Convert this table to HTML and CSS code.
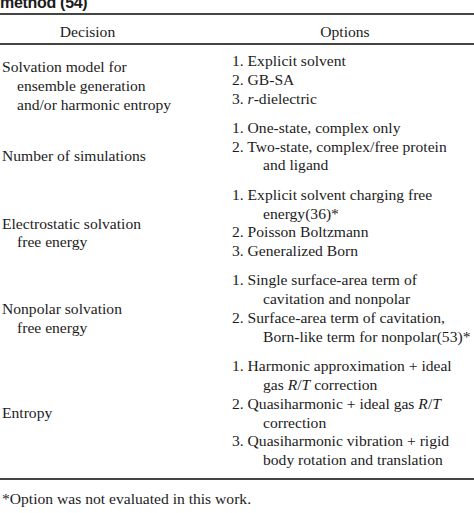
FILE: index.html
```html
<!DOCTYPE html>
<html>
<head>
<meta charset="utf-8">
<link rel="stylesheet" href="styles.css">
</head>
<body>
<div class="title">method (54)</div>
<div class="table">
  <div class="head">
    <div class="hcell h1">Decision</div>
    <div class="hcell h2">Options</div>
  </div>
  <div class="body">
    <div class="row">
      <div class="dec off6">Solvation model for<br>ensemble generation<br>and/or harmonic entropy</div>
      <ol class="opts">
        <li>1. Explicit solvent</li>
        <li>2. GB-SA</li>
        <li>3. <i>r</i>-dielectric</li>
      </ol>
    </div>
    <div class="row">
      <div class="dec off9">Number of simulations</div>
      <ol class="opts">
        <li>1. One-state, complex only</li>
        <li>2. Two-state, complex/free protein<br>and ligand</li>
      </ol>
    </div>
    <div class="row">
      <div class="dec off10">Electrostatic solvation<br>free energy</div>
      <ol class="opts">
        <li>1. Explicit solvent charging free<br>energy(36)*</li>
        <li>2. Poisson Boltzmann</li>
        <li>3. Generalized Born</li>
      </ol>
    </div>
    <div class="row">
      <div class="dec off10">Nonpolar solvation<br>free energy</div>
      <ol class="opts">
        <li>1. Single surface-area term of<br>cavitation and nonpolar</li>
        <li>2. Surface-area term of cavitation,<br>Born-like term for nonpolar(53)*</li>
      </ol>
    </div>
    <div class="row">
      <div class="dec">Entropy</div>
      <ol class="opts">
        <li>1. Harmonic approximation + ideal<br>gas <i>R</i>/<i>T</i> correction</li>
        <li>2. Quasiharmonic + ideal gas <i>R</i>/<i>T</i><br>correction</li>
        <li>3. Quasiharmonic vibration + rigid<br>body rotation and translation</li>
      </ol>
    </div>
  </div>
</div>
<div class="foot">*Option was not evaluated in this work.</div>
</body>
</html>
```

FILE: styles.css
```css
html, body {
  margin: 0;
  padding: 0;
  background: #fff;
}
body {
  width: 474px;
  height: 513px;
  overflow: hidden;
  font-family: "Liberation Serif", "Times New Roman", serif;
  font-size: 15.6px;
  color: #1c1c1c;
}
.title {
  font-family: "Liberation Sans", Arial, sans-serif;
  font-weight: bold;
  font-size: 16px;
  letter-spacing: -0.3px;
  line-height: 18px;
  height: 19px;
  margin-top: -6px;
  color: #1c1c1c;
}
.table {
  border-top: 2px solid #444;
  border-bottom: 2px solid #444;
}
.head {
  display: grid;
  grid-template-columns: 175px 1fr;
  border-bottom: 2px solid #444;
}
.hcell {
  text-align: center;
  line-height: 19px;
  padding: 7px 0 2px;
}
.h2 {
  padding-left: 41px;
}
.body {
  display: flex;
  flex-direction: column;
  gap: 10.5px;
  padding: 7px 0 8px;
}
.row {
  display: grid;
  grid-template-columns: 232px 1fr;
  line-height: 18.8px;
}
.dec {
  align-self: center;
  padding-left: 17px;
  text-indent: -15px;
  white-space: nowrap;
}
.off6 { padding-top: 6px; margin-bottom: -6px; }
.off9 { padding-top: 9px; margin-bottom: -9px; }
.off10 { padding-top: 10px; margin-bottom: -10px; }
.opts {
  list-style: none;
  margin: 0;
  padding: 0;
  white-space: nowrap;
}
.opts li {
  padding-left: 31px;
  text-indent: -31px;
}
.foot {
  line-height: 19px;
  padding: 9px 0 0 2px;
}
```
